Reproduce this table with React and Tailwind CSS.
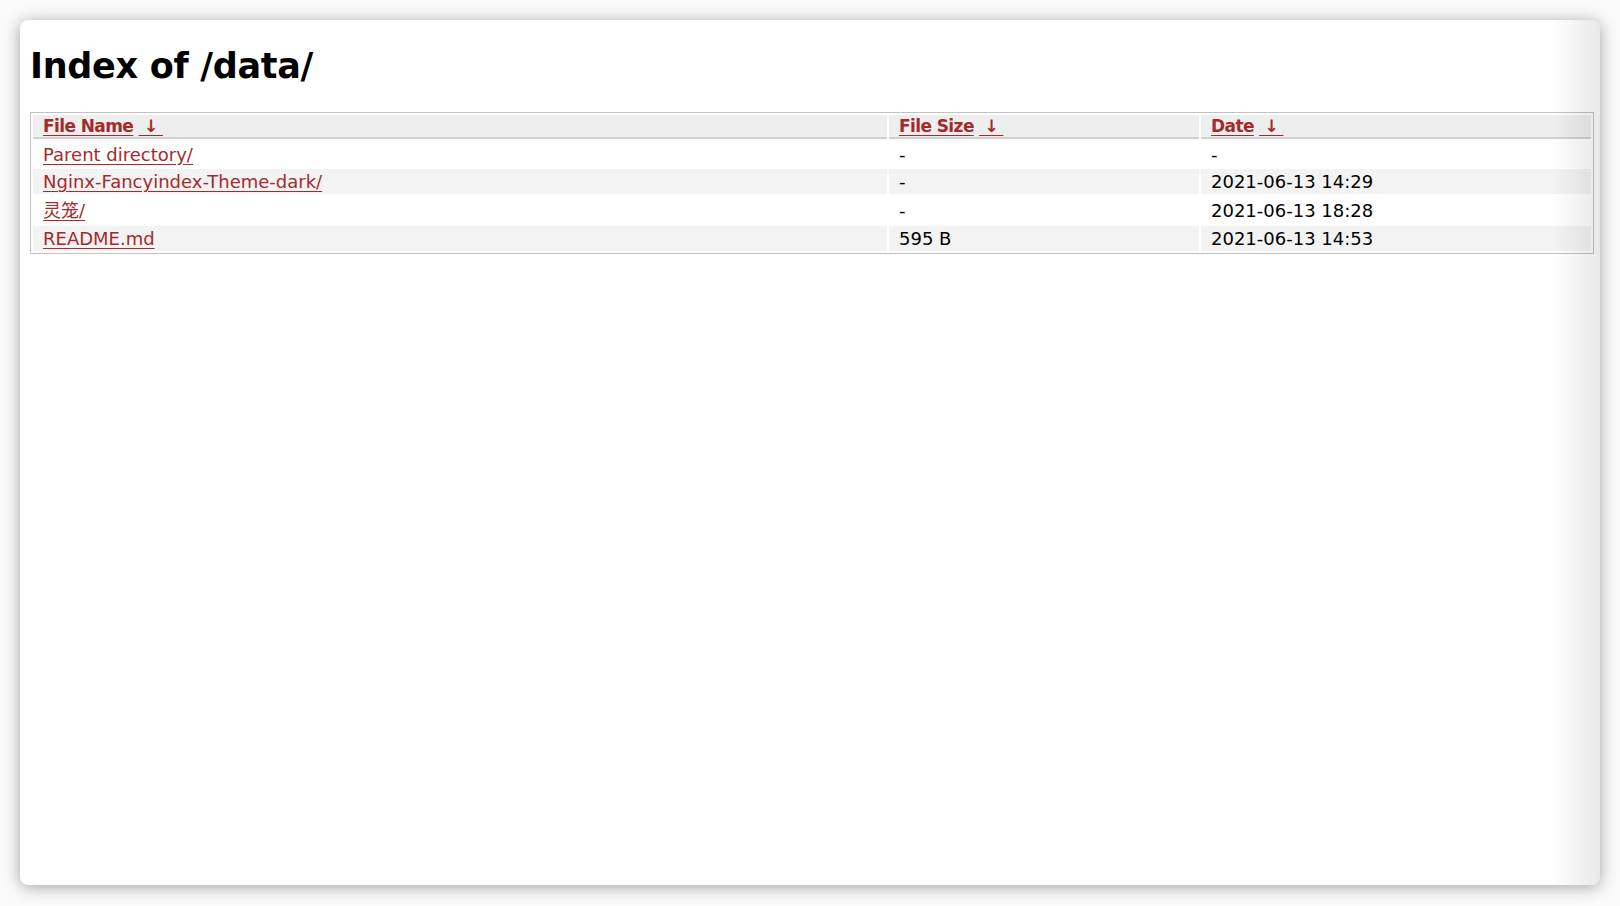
import React from 'react';

const files = [
  { name: 'Parent directory/', size: '-', date: '-', height: 'h-[26px]' },
  { name: 'Nginx-Fancyindex-Theme-dark/', size: '-', date: '2021-06-13 14:29', height: 'h-[24px]' },
  { name: '灵笼/', size: '-', date: '2021-06-13 18:28', height: 'h-[28px]' },
  { name: 'README.md', size: '595 B', date: '2021-06-13 14:53', height: 'h-[24px]' },
];

function SortHeader({ label, className }) {
  return (
    <th className={`${className} h-[22px] leading-[22px] bg-[#eeeeee] border-b-2 border-[#d0d0d0] pl-[10px] text-left text-[17px] tracking-[-0.6px] font-bold align-middle`}>
      <a href="#" className="text-[#a52a2a] underline underline-offset-[3px]">
        {label}
      </a>
      <span> </span>
      <a href="#" className="text-[#a52a2a] underline underline-offset-[3px]">
        {'\u00a0↓\u00a0'}
      </a>
    </th>
  );
}

export default function App() {
  return (
    <div className="w-[1620px] h-[906px] bg-[#fafafa] pt-[20px] pl-[20px] overflow-hidden">
      <div
        className="relative w-[1580px] h-[865px] bg-white rounded-[8px] shadow-[0_2px_16px_rgba(0,0,0,0.35)] pt-[26px] pl-[10px] overflow-hidden"
        style={{ fontFamily: "'DejaVu Sans', 'Noto Sans CJK SC', sans-serif" }}
      >
        <h1 className="text-[35px] leading-[40px] font-bold tracking-[-0.3px] text-black">
          Index of /data/
        </h1>

        <table className="mt-[26px] w-[1564px] table-fixed border-separate border-spacing-[2px] border border-[#c2c2c2] text-[18px] leading-[24px] text-black">
          <colgroup>
            <col className="w-[854px]" />
            <col className="w-[310px]" />
            <col className="w-[390px]" />
          </colgroup>
          <thead>
            <tr>
              <SortHeader label="File Name" />
              <SortHeader label="File Size" />
              <SortHeader label="Date" />
            </tr>
          </thead>
          <tbody>
            {files.map((file, index) => (
              <tr key={file.name} className={index % 2 === 1 ? 'bg-[#f3f3f3]' : 'bg-white'}>
                <td className={`${file.height} pl-[10px] pt-px align-middle`}>
                  <a href="#" className="text-[#a52a2a] underline underline-offset-[3px]">
                    {file.name}
                  </a>
                </td>
                <td className="pl-[10px] pt-px align-middle">{file.size}</td>
                <td className="pl-[10px] pt-px align-middle">{file.date}</td>
              </tr>
            ))}
          </tbody>
        </table>

        {/* window edge shading on the right */}
        <div className="pointer-events-none absolute top-0 right-0 bottom-0 w-[48px] bg-linear-to-r from-transparent to-black/[0.09]" />
      </div>
    </div>
  );
}
